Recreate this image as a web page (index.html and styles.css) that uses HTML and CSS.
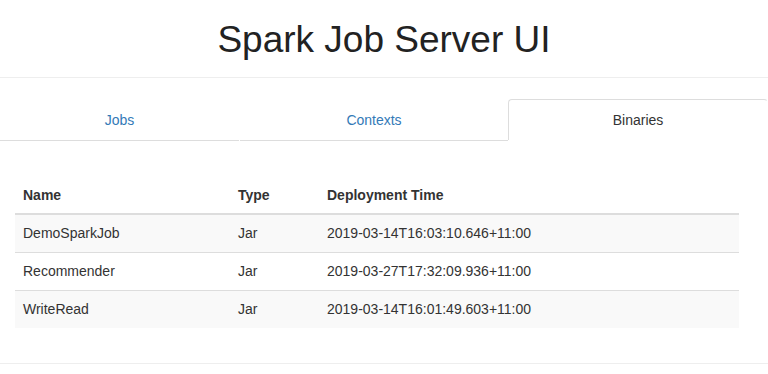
FILE: index.html
```html
<!DOCTYPE html>
<html lang="en">
<head>
    <meta charset="UTF-8">
    <meta name="viewport" content="width=device-width, initial-scale=1.0">
    <title>Spark Job Server UI</title>
    <link rel="stylesheet" href="styles.css">
</head>
<body>

    <!-- Page header -->
    <div class="page-header">
        <h1>Spark Job Server UI</h1>
    </div>

    <!-- Tabs -->
    <ul class="nav-tabs">
        <li><a href="#jobs">Jobs</a></li>
        <li><a href="#contexts">Contexts</a></li>
        <li class="active"><a href="#binaries">Binaries</a></li>
    </ul>

    <!-- Binaries table -->
    <div class="tab-content" id="binaries">
        <table class="table">
            <thead>
                <tr>
                    <th class="col-name">Name</th>
                    <th class="col-type">Type</th>
                    <th>Deployment Time</th>
                </tr>
            </thead>
            <tbody>
                <tr>
                    <td>DemoSparkJob</td>
                    <td>Jar</td>
                    <td>2019-03-14T16:03:10.646+11:00</td>
                </tr>
                <tr>
                    <td>Recommender</td>
                    <td>Jar</td>
                    <td>2019-03-27T17:32:09.936+11:00</td>
                </tr>
                <tr>
                    <td>WriteRead</td>
                    <td>Jar</td>
                    <td>2019-03-14T16:01:49.603+11:00</td>
                </tr>
            </tbody>
        </table>
    </div>

    <div class="footer"></div>

</body>
</html>
```

FILE: styles.css
```css
/* Basic reset */
* {
    margin: 0;
    padding: 0;
    box-sizing: border-box;
}

body {
    font-family: "Liberation Sans", Arial, sans-serif;
    font-size: 14px;
    line-height: 20px;
    color: #333;
    background-color: #fff;
}

/* Header */
.page-header {
    padding: 20px 0 16px;
    border-bottom: 1px solid #eee;
}

.page-header h1 {
    font-size: 37px;
    font-weight: normal;
    line-height: 1.1;
    text-align: center;
    color: #222;
}

/* Tabs */
.nav-tabs {
    list-style: none;
    display: grid;
    grid-template-columns: 239px 269px 1fr;
    margin-top: 21px;
}

.nav-tabs li {
    border-bottom: 1px solid #ddd;
}

.nav-tabs li:nth-child(2) {
    margin-left: 1px;
}

.nav-tabs a {
    display: block;
    padding: 10px 15px;
    border: 1px solid transparent;
    border-bottom: none;
    border-radius: 4px 4px 0 0;
    text-align: center;
    color: #337ab7;
    text-decoration: none;
}

.nav-tabs li.active {
    border-bottom-color: transparent;
}

.nav-tabs li.active a {
    color: #333;
    border-color: #ddd;
    border-right-color: transparent;
}

/* Table */
.tab-content {
    padding: 0 29px 0 15px;
    margin-top: 36px;
}

.table {
    width: 100%;
    border-collapse: collapse;
    border-spacing: 0;
}

.table th,
.table td {
    padding: 8px 8px 9px;
    text-align: left;
    vertical-align: top;
}

.table th {
    padding-bottom: 8px;
    font-weight: bold;
    vertical-align: bottom;
    border-bottom: 2px solid #ddd;
}

.table td {
    border-top: 1px solid #ddd;
}

.table tbody tr:first-child td {
    border-top: none;
}

.table tbody tr:nth-child(odd) {
    background-color: #f9f9f9;
}

.col-name {
    width: 215px;
}

.col-type {
    width: 89px;
}

/* Footer line */
.footer {
    margin-top: 35px;
    border-top: 1px solid #eee;
}
```
